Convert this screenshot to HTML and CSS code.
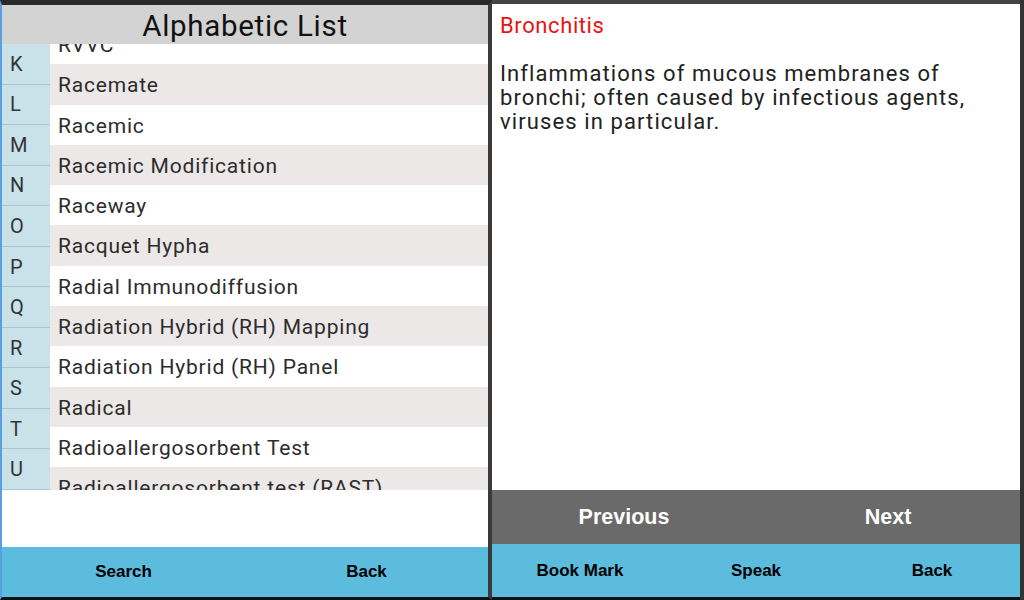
FILE: index.html
```html
<!DOCTYPE html>
<html>
<head>
<meta charset="utf-8">
<link rel="stylesheet" href="styles.css">
</head>
<body>
<div class="app">
  <section class="left">
    <div class="header">Alphabetic List</div>
    <div class="listarea">
      <div class="index">
        <div class="letter">K</div>
        <div class="letter">L</div>
        <div class="letter">M</div>
        <div class="letter">N</div>
        <div class="letter">O</div>
        <div class="letter">P</div>
        <div class="letter">Q</div>
        <div class="letter">R</div>
        <div class="letter">S</div>
        <div class="letter">T</div>
        <div class="letter">U</div>
      </div>
      <div class="list">
        <div class="rows">
          <div class="row">RVVC</div>
          <div class="row alt">Racemate</div>
          <div class="row">Racemic</div>
          <div class="row alt">Racemic Modification</div>
          <div class="row">Raceway</div>
          <div class="row alt">Racquet Hypha</div>
          <div class="row">Radial Immunodiffusion</div>
          <div class="row alt">Radiation Hybrid (RH) Mapping</div>
          <div class="row">Radiation Hybrid (RH) Panel</div>
          <div class="row alt">Radical</div>
          <div class="row">Radioallergosorbent Test</div>
          <div class="row alt">Radioallergosorbent test (RAST)</div>
        </div>
      </div>
    </div>
    <div class="spacer"></div>
    <div class="btnbar">
      <div class="btn">Search</div>
      <div class="btn">Back</div>
    </div>
  </section>
  <section class="right">
    <div class="content">
      <div class="title">Bronchitis</div>
      <p class="def">Inflammations of mucous membranes of bronchi; often caused by infectious agents, viruses in particular.</p>
    </div>
    <div class="navbar">
      <div class="nav">Previous</div>
      <div class="nav">Next</div>
    </div>
    <div class="btnbar rbar">
      <div class="btn">Book Mark</div>
      <div class="btn">Speak</div>
      <div class="btn">Back</div>
    </div>
  </section>
</div>
</body>
</html>
```

FILE: styles.css
```css
html, body {
  margin: 0;
  padding: 0;
  background: #000;
  font-family: Roboto, "Liberation Sans", sans-serif;
}
.app {
  display: flex;
  width: 1024px;
  height: 600px;
  overflow: hidden;
}
.left {
  width: 486px;
  height: 592px;
  display: flex;
  flex-direction: column;
  background: #fff;
  border-left: 2px solid #5a9fe0;
  border-top: 5px solid #2a2a2a;
  border-right: 4px solid #3a3a3a;
  border-bottom: 3px solid #111;
}
.header {
  height: 39px;
  background: #d3d3d3;
  color: #111;
  font-size: 29.5px;
  letter-spacing: 0.7px;
  line-height: 43px;
  text-align: center;
  flex: none;
}
.listarea {
  height: 446px;
  display: flex;
  flex: none;
}
.index {
  width: 48px;
  background: #c9e2e9;
  display: flex;
  flex-direction: column;
}
.letter {
  flex: 1;
  border-bottom: 1px solid #a7c7d3;
  font-size: 20px;
  letter-spacing: 0.5px;
  color: #333;
  padding-left: 8px;
  display: flex;
  align-items: center;
}
.list {
  flex: 1;
  overflow: hidden;
}
.rows {
  margin-top: -20px;
}
.row {
  height: 40.3px;
  line-height: 42px;
  padding-left: 8px;
  font-size: 21px;
  letter-spacing: 0.8px;
  color: #2c2c2c;
  background: #fff;
  white-space: nowrap;
}
.row.alt {
  background: #ece8e7;
}
.spacer {
  flex: 1;
  background: #fff;
}
.btnbar {
  height: 50px;
  flex: none;
  display: flex;
  background: #5bbcde;
}
.btn {
  flex: 1;
  display: flex;
  align-items: center;
  justify-content: center;
  font-family: "Liberation Sans", Arial, sans-serif;
  font-weight: bold;
  font-size: 17px;
  color: #000;
}
.right {
  width: 528px;
  height: 600px;
  display: flex;
  flex-direction: column;
  border-right: 4px solid #333;
  background: #fff;
  box-sizing: content-box;
}
.content {
  flex: 1;
  background: #fff;
  border-top: 4px solid #444;
  padding: 10px 8px 0 8px;
}
.title {
  color: #e81313;
  font-size: 22px;
  letter-spacing: 0.6px;
  line-height: 24px;
}
.def {
  margin: 24px 0 0 0;
  font-size: 22px;
  letter-spacing: 1.1px;
  line-height: 24px;
  color: #222;
}
.navbar {
  height: 54px;
  flex: none;
  display: flex;
  background: #6a6a6a;
}
.nav {
  flex: 1;
  display: flex;
  align-items: center;
  justify-content: center;
  font-family: "Liberation Sans", Arial, sans-serif;
  font-weight: bold;
  font-size: 21.5px;
  color: #fff;
}
.rbar {
  height: 53px;
  border-bottom: 3px solid #111;
}
```
